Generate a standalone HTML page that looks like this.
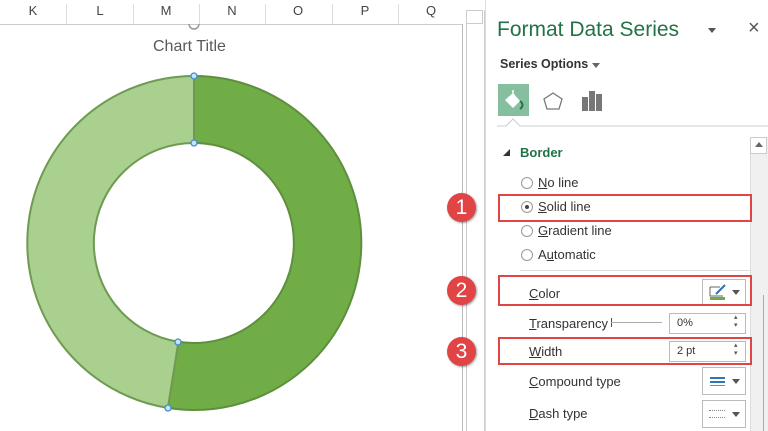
<!DOCTYPE html><html><head><style>
body{margin:0;width:768px;height:431px;overflow:hidden;background:#fff;font-family:"Liberation Sans",sans-serif;position:relative}
.a{position:absolute}
.col{position:absolute;top:0;height:22px;line-height:22px;font-size:13px;color:#444;text-align:center;width:66px}
.lbl{position:absolute;font-size:13px;color:#333}
.rb{position:absolute;width:10px;height:10px;border:1px solid #999;border-radius:50%;background:#fff}
.red{position:absolute;border:2px solid #e04444;box-sizing:border-box;left:498px;width:254px}
.num{position:absolute;left:447px;width:29px;height:29px;border-radius:50%;background:#e04444;color:#fff;font-size:21px;text-align:center;line-height:29px;box-shadow:1px 1px 2px rgba(0,0,0,.4)}
.box{position:absolute;border:1px solid #bbb;background:#fff;box-sizing:border-box;font-size:11px;color:#333}
.dd{position:absolute;width:0;height:0;border-left:4px solid transparent;border-right:4px solid transparent;border-top:5px solid #555}
</style></head><body>
<div class="a" style="left:0;top:24px;width:463px;height:1px;background:#ccc"></div>
<div class="col" style="left:0">K</div><div class="col" style="left:67px">L</div><div class="col" style="left:133px">M</div><div class="col" style="left:199px">N</div><div class="col" style="left:265px">O</div><div class="col" style="left:332px">P</div><div class="col" style="left:398px">Q</div>
<div class="a" style="left:66px;top:4px;width:1px;height:20px;background:#ddd"></div>
<div class="a" style="left:133px;top:4px;width:1px;height:20px;background:#ddd"></div>
<div class="a" style="left:199px;top:4px;width:1px;height:20px;background:#ddd"></div>
<div class="a" style="left:265px;top:4px;width:1px;height:20px;background:#ddd"></div>
<div class="a" style="left:332px;top:4px;width:1px;height:20px;background:#ddd"></div>
<div class="a" style="left:398px;top:4px;width:1px;height:20px;background:#ddd"></div>
<div class="a" style="left:462px;top:24px;width:1px;height:407px;background:#bbb"></div>
<div class="a" style="left:466px;top:10px;width:17px;height:421px;border-left:1px solid #ccc;border-right:1px solid #ccc;background:#fff"></div>
<div class="a" style="left:466px;top:10px;width:17px;height:14px;border:1px solid #ccc;box-sizing:border-box"></div>
<div class="a" style="left:153px;top:38px;font-size:16px;color:#595959">Chart Title</div>
<svg class="a" style="left:0;top:0" width="470" height="431">
<path d="M189,24 A5,5 0 0 0 199,24" fill="none" stroke="#999" stroke-width="1.5"/>
<path d="M194,76 A167,167 0 1 1 167.9,407.9 L178.4,341.8 A100,100 0 1 0 194,143 Z" fill="#70ad47" stroke="#5f8f3e" stroke-width="2"/>
<path d="M167.9,407.9 A167,167 0 0 1 194,76 L194,143 A100,100 0 0 0 178.4,341.8 Z" fill="#a9d08e" stroke="#6f9a52" stroke-width="2"/>
<g fill="#cfe3f7" stroke="#3d8fd6" stroke-width="1.3"><circle cx="194" cy="76" r="3"/><circle cx="194" cy="143" r="3"/><circle cx="178" cy="342" r="3"/><circle cx="168" cy="408" r="3"/></g>
</svg>
<div class="a" style="left:485px;top:0;width:1px;height:431px;background:#ddd"></div>
<div class="a" style="left:497px;top:18px;font-size:21px;color:#217346">Format Data Series</div>
<div class="dd" style="left:708px;top:28px"></div>
<div class="a" style="left:748px;top:17px;font-size:20px;color:#555">×</div>
<div class="a" style="left:500px;top:57px;font-size:12.5px;font-weight:bold;color:#333">Series Options</div>
<div class="dd" style="left:592px;top:63px;border-top-color:#666"></div>
<div class="a" style="left:498px;top:84px;width:31px;height:32px;background:#86bf9f"></div>
<svg class="a" style="left:498px;top:84px" width="110" height="32">
<path d="M7,16 L15,9 L22,17 L15,24 Z" fill="#fff"/><path d="M15,6 L15,15" stroke="#fff" stroke-width="1.5"/><path d="M22,17 Q27,21 22,25" fill="none" stroke="#217346" stroke-width="2"/>
<path d="M55,9 L64,15 L61,25 L49,25 L46,15 Z" fill="none" stroke="#777" stroke-width="1.3"/>
<rect x="84" y="13" width="6" height="14" fill="#777"/><rect x="91" y="7" width="6" height="20" fill="#777"/><rect x="98" y="10" width="6" height="17" fill="#777"/>
</svg>
<svg class="a" style="left:497px;top:118px" width="271" height="10"><path d="M0,8 L9,8 L16,1 L23,8 L271,8" fill="none" stroke="#ccc"/></svg>
<div class="a" style="left:750px;top:137px;width:18px;height:294px;background:#f0f0f0;border-left:1px solid #ddd"></div>
<div class="a" style="left:750px;top:137px;width:17px;height:17px;border:1px solid #ccc;box-sizing:border-box;background:#fff"></div>
<div class="a" style="left:755px;top:142px;border-left:4px solid transparent;border-right:4px solid transparent;border-bottom:5px solid #666;width:0;height:0"></div>
<div class="a" style="left:503px;top:149px;border-left:7px solid transparent;border-bottom:7px solid #333;width:0;height:0"></div>
<div class="a" style="left:520px;top:145px;font-size:13px;font-weight:bold;color:#217346">Border</div>
<div class="rb" style="left:521px;top:177px"></div><div class="lbl" style="left:538px;top:175px"><u>N</u>o line</div>
<div class="rb" style="left:521px;top:201px"></div><div class="a" style="left:525px;top:205px;width:4px;height:4px;border-radius:50%;background:#444"></div><div class="lbl" style="left:538px;top:199px"><u>S</u>olid line</div>
<div class="rb" style="left:521px;top:225px"></div><div class="lbl" style="left:538px;top:223px"><u>G</u>radient line</div>
<div class="rb" style="left:521px;top:249px"></div><div class="lbl" style="left:538px;top:247px">A<u>u</u>tomatic</div>
<div class="a" style="left:520px;top:270px;width:230px;height:1px;background:#ddd"></div>
<div class="lbl" style="left:529px;top:286px"><u>C</u>olor</div>
<div class="lbl" style="left:529px;top:316px"><u>T</u>ransparency</div>
<div class="lbl" style="left:529px;top:344px"><u>W</u>idth</div>
<div class="lbl" style="left:529px;top:374px"><u>C</u>ompound type</div>
<div class="lbl" style="left:529px;top:406px"><u>D</u>ash type</div>
<div class="a" style="left:763px;top:295px;width:1px;height:136px;background:#aaa"></div>
<div class="box" style="left:702px;top:279px;width:44px;height:27px"></div>
<svg class="a" style="left:708px;top:283px" width="20" height="18"><path d="M2,4 L12,4 M2,4 L2,13 L15,13" fill="none" stroke="#666"/><path d="M8,11 L17,2" stroke="#2e75b6" stroke-width="2"/><rect x="2" y="14" width="15" height="3" fill="#70ad47"/></svg>
<div class="dd" style="left:732px;top:290px"></div>
<div class="a" style="left:611px;top:318px;width:1px;height:9px;background:#555"></div><div class="a" style="left:611px;top:322px;width:51px;height:1px;background:#aaa"></div>
<div class="box" style="left:669px;top:313px;width:77px;height:21px;padding:3px 0 0 7px">0%</div>
<div class="a" style="left:734px;top:314px;font-size:7px;color:#555;line-height:8px">▴<br>▾</div>
<div class="box" style="left:669px;top:341px;width:77px;height:21px;padding:3px 0 0 7px">2 pt</div>
<div class="a" style="left:734px;top:342px;font-size:7px;color:#555;line-height:8px">▴<br>▾</div>
<div class="box" style="left:702px;top:367px;width:44px;height:28px"></div>
<div class="a" style="left:710px;top:377px;width:15px;height:2px;background:#2e75b6"></div><div class="a" style="left:710px;top:381px;width:15px;height:2px;background:#2e75b6"></div><div class="a" style="left:710px;top:385px;width:15px;height:1px;background:#888"></div>
<div class="dd" style="left:732px;top:379px"></div>
<div class="box" style="left:702px;top:400px;width:44px;height:28px"></div>
<div class="a" style="left:709px;top:410px;width:16px;height:6px;border-top:1px dotted #888;border-bottom:1px dotted #888"></div>
<div class="dd" style="left:732px;top:412px"></div>
<div class="red" style="top:194px;height:28px"></div>
<div class="red" style="top:275px;height:31px"></div>
<div class="red" style="top:337px;height:28px"></div>
<div class="num" style="top:193px">1</div>
<div class="num" style="top:276px">2</div>
<div class="num" style="top:337px">3</div>
</body></html>
